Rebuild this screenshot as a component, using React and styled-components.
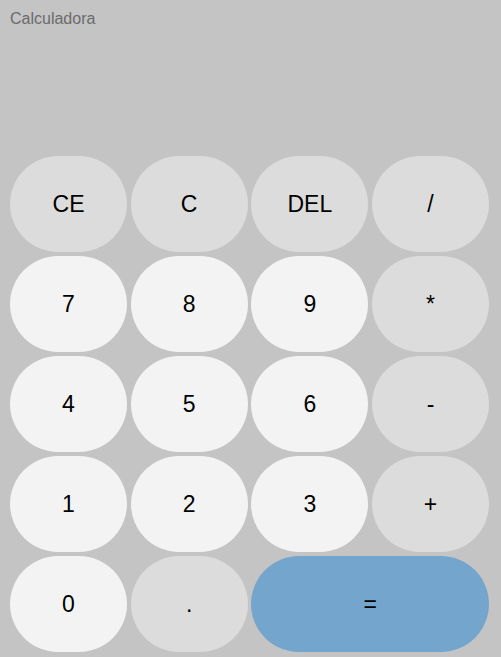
import React from "react";
import styled, { createGlobalStyle } from "styled-components";

const Global = createGlobalStyle`
  html, body {
    margin: 0;
    padding: 0;
    background: #c4c4c4;
    font-family: "Liberation Sans", Arial, sans-serif;
  }
`;

const Page = styled.div`
  padding: 0 12px 0 10px;
  display: flex;
  flex-direction: column;
`;

const Display = styled.div`
  height: 156px;
  box-sizing: border-box;
  padding-top: 9px;
`;

const Title = styled.div`
  font-size: 16px;
  line-height: 20px;
  color: #6b6b6b;
`;

const Keys = styled.div`
  display: grid;
  grid-template-columns: repeat(4, 1fr);
  grid-auto-rows: 96px;
  column-gap: 3.67px;
  row-gap: 4px;
`;

const bg = { fn: "#dcdcdc", num: "#f3f3f3", eq: "#74a5cc" };

const Key = styled.button`
  border: none;
  outline: none;
  margin: 0;
  padding: 0;
  border-radius: 50px;
  background: ${(p) => bg[p.$kind]};
  grid-column: span ${(p) => p.$span || 1};
  font-family: "Liberation Sans", Arial, sans-serif;
  font-size: 23px;
  color: #000;
  display: flex;
  align-items: center;
  justify-content: center;
  cursor: pointer;
`;

const keys = [
  ["CE", "fn"], ["C", "fn"], ["DEL", "fn"], ["/", "fn"],
  ["7", "num"], ["8", "num"], ["9", "num"], ["*", "fn"],
  ["4", "num"], ["5", "num"], ["6", "num"], ["-", "fn"],
  ["1", "num"], ["2", "num"], ["3", "num"], ["+", "fn"],
  ["0", "num"], [".", "fn"], ["=", "eq", 2],
];

export default function App() {
  return (
    <>
      <Global />
      <Page>
        <Display>
          <Title>Calculadora</Title>
        </Display>
        <Keys>
          {keys.map(([label, kind, span]) => (
            <Key key={label} $kind={kind} $span={span}>
              {label}
            </Key>
          ))}
        </Keys>
      </Page>
    </>
  );
}
